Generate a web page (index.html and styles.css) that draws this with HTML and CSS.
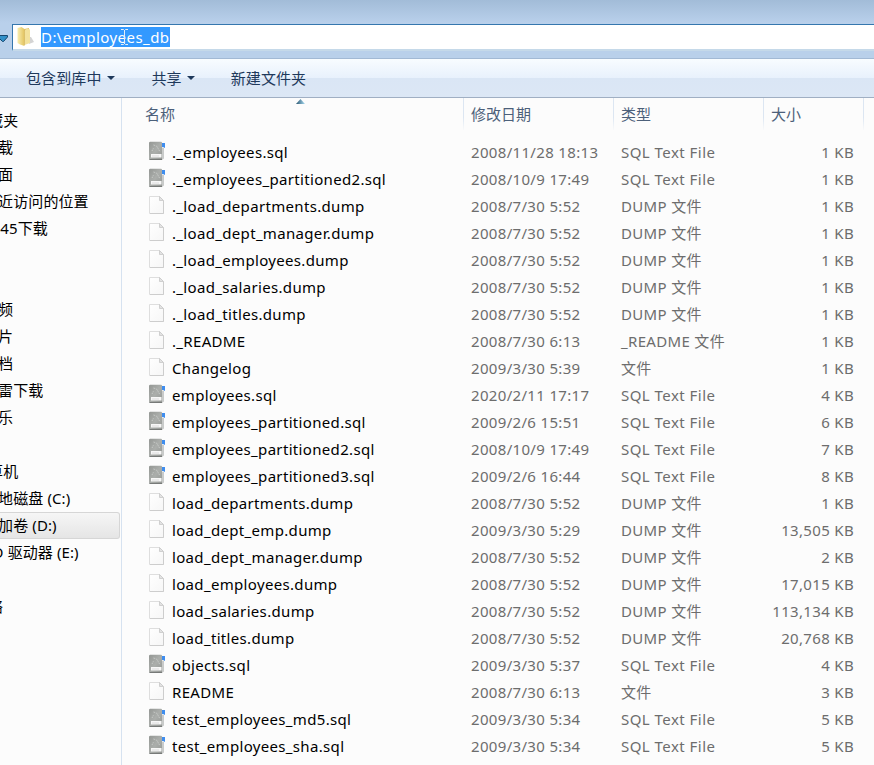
FILE: index.html
```
<!DOCTYPE html>
<html lang="zh-CN">
<head>
<meta charset="utf-8">
<title>employees_db</title>
<link rel="stylesheet" href="styles.css">
</head>
<body>
<svg class="defs" width="0" height="0">
  <defs>
    <linearGradient id="gray" x1="0" y1="0" x2="1" y2="1"><stop offset="0" stop-color="#949794"/><stop offset=".5" stop-color="#abaeab"/><stop offset="1" stop-color="#949794"/></linearGradient>
    <linearGradient id="page" x1="0" y1="0" x2="1" y2="1"><stop offset="0" stop-color="#fff"/><stop offset="1" stop-color="#f6f6f6"/></linearGradient>
    <linearGradient id="fold" x1="0" y1="0" x2="1" y2="0"><stop offset="0" stop-color="#f9edb0"/><stop offset="1" stop-color="#e2c35e"/></linearGradient>
    <linearGradient id="arrow" x1="0" y1="0" x2="1" y2="0"><stop offset="0" stop-color="#27536d"/><stop offset="1" stop-color="#a9dcf3"/></linearGradient>
    <symbol id="sql" viewBox="0 0 18 20">
      <path d="M12.500 2h4.500v5l-2-1h-2.500z" fill="#3f8dee"/>
      <path d="M2 .7h11q1 0 1 1v17.300H2.500q-1.500 0-1.500-1.500V1.500z" fill="url(#gray)"/>
      <path d="M14 6.500l2 .5v10.500l-2 1.500z" fill="#c9cbca"/>
      <path d="M4 10l1.500-3M5.500 4l3 1 2 3 1.500 3" stroke="#d0d3d0" stroke-width=".8" stroke-dasharray="1.500 1" fill="none"/>
      <path d="M3 13h10.500v3.500H3z" fill="#f7f7f7"/>
      <path d="M4 15h7" stroke="#ccc" stroke-width=".6"/>
      <path d="M1.500 18.500h12.500" stroke="#777a78"/>
    </symbol>
    <symbol id="doc" viewBox="0 0 18 20">
      <path d="M1.500 1.500h10l4 4v13h-14z" fill="url(#page)" stroke="#dedede"/>
      <path d="M2 18.500h13.500V6" fill="none" stroke="#cdcdcd"/>
      <path d="M11.500 1.500v4h4z" fill="#e3e3e3" stroke="#c8c8c8" stroke-width=".8"/>
    </symbol>
  </defs>
</svg>
<div class="window">
  <header class="top">
    <svg class="history" width="9" height="8" viewBox="0 0 9 8"><path d="M-4 .5H7.500v1.500L3.500 6.500H2.500L-4 1z" fill="#3290c8"/><path d="M-1 .5H7.500v1.500L3.500 6.500H2.500L-1 3" fill="none" stroke="#16466e"/></svg>
    <div class="address">
      <svg width="20" height="22" viewBox="0 0 20 22">
        <path d="M13 18l5-2-3-5h-3z" fill="#aaa" opacity=".5"/>
        <path d="M6 3.500l7-1.500v14l-4 2z" fill="#dfc36a"/>
        <path d="M1.500 2l4-1 3 2v17L4 18.500 1.500 17z" fill="url(#fold)"/>
        <path d="M8 5l3-2.500 3 1V17l-5.500 2z" fill="#f3e29c"/>
        <path d="M8.500 4v15" stroke="#d3b55c" stroke-width=".7"/>
      </svg>
      <span class="path">D:\employees_db</span>
      <svg class="caret" width="9" height="16" viewBox="0 0 9 16"><path d="M1 .5h2.500l1 1 1-1H8M4.500 1v14M1 15.500h2.500l1-1 1 1H8" fill="none" stroke="#e6eef5"/></svg>
    </div>
  </header>
  <nav class="toolbar">
    <span class="tool">包含到库中<i class="down"></i></span>
    <span class="tool share">共享<i class="down"></i></span>
    <span class="tool create">新建文件夹</span>
  </nav>
  <main class="body">
    <aside class="tree">
      <div class="node group">收藏夹</div>
      <div class="node">下载</div>
      <div class="node">桌面</div>
      <div class="node">最近访问的位置</div>
      <div class="node">2345下载</div>
      <div class="node"></div>
      <div class="node"></div>
      <div class="node">视频</div>
      <div class="node">图片</div>
      <div class="node">文档</div>
      <div class="node">迅雷下载</div>
      <div class="node">音乐</div>
      <div class="node"></div>
      <div class="node group">计算机</div>
      <div class="node">本地磁盘 (C:)</div>
      <div class="node selected">附加卷 (D:)</div>
      <div class="node">CD 驱动器 (E:)</div>
      <div class="node"></div>
      <div class="node group">网络</div>
    </aside>
    <section class="files">
      <div class="heads"><span class="sorted">名称<svg width="9" height="5" viewBox="0 0 9 5"><path d="M0 5L4.500 0 9 5z" fill="url(#arrow)"/></svg></span><span>修改日期</span><span>类型</span><span>大小</span></div>
      <div class="row"><svg><use href="#sql"/></svg><b>._employees.sql</b><span>2008/11/28 18:13</span><span class="type">SQL Text File</span><em>1 KB</em></div>
      <div class="row"><svg><use href="#sql"/></svg><b>._employees_partitioned2.sql</b><span>2008/10/9 17:49</span><span class="type">SQL Text File</span><em>1 KB</em></div>
      <div class="row"><svg><use href="#doc"/></svg><b>._load_departments.dump</b><span>2008/7/30 5:52</span><span>DUMP 文件</span><em>1 KB</em></div>
      <div class="row"><svg><use href="#doc"/></svg><b>._load_dept_manager.dump</b><span>2008/7/30 5:52</span><span>DUMP 文件</span><em>1 KB</em></div>
      <div class="row"><svg><use href="#doc"/></svg><b>._load_employees.dump</b><span>2008/7/30 5:52</span><span>DUMP 文件</span><em>1 KB</em></div>
      <div class="row"><svg><use href="#doc"/></svg><b>._load_salaries.dump</b><span>2008/7/30 5:52</span><span>DUMP 文件</span><em>1 KB</em></div>
      <div class="row"><svg><use href="#doc"/></svg><b>._load_titles.dump</b><span>2008/7/30 5:52</span><span>DUMP 文件</span><em>1 KB</em></div>
      <div class="row"><svg><use href="#doc"/></svg><b>._README</b><span>2008/7/30 6:13</span><span>_README 文件</span><em>1 KB</em></div>
      <div class="row"><svg><use href="#doc"/></svg><b>Changelog</b><span>2009/3/30 5:39</span><span>文件</span><em>1 KB</em></div>
      <div class="row"><svg><use href="#sql"/></svg><b>employees.sql</b><span>2020/2/11 17:17</span><span class="type">SQL Text File</span><em>4 KB</em></div>
      <div class="row"><svg><use href="#sql"/></svg><b>employees_partitioned.sql</b><span>2009/2/6 15:51</span><span class="type">SQL Text File</span><em>6 KB</em></div>
      <div class="row"><svg><use href="#sql"/></svg><b>employees_partitioned2.sql</b><span>2008/10/9 17:49</span><span class="type">SQL Text File</span><em>7 KB</em></div>
      <div class="row"><svg><use href="#sql"/></svg><b>employees_partitioned3.sql</b><span>2009/2/6 16:44</span><span class="type">SQL Text File</span><em>8 KB</em></div>
      <div class="row"><svg><use href="#doc"/></svg><b>load_departments.dump</b><span>2008/7/30 5:52</span><span>DUMP 文件</span><em>1 KB</em></div>
      <div class="row"><svg><use href="#doc"/></svg><b>load_dept_emp.dump</b><span>2009/3/30 5:29</span><span>DUMP 文件</span><em>13,505 KB</em></div>
      <div class="row"><svg><use href="#doc"/></svg><b>load_dept_manager.dump</b><span>2008/7/30 5:52</span><span>DUMP 文件</span><em>2 KB</em></div>
      <div class="row"><svg><use href="#doc"/></svg><b>load_employees.dump</b><span>2008/7/30 5:52</span><span>DUMP 文件</span><em>17,015 KB</em></div>
      <div class="row"><svg><use href="#doc"/></svg><b>load_salaries.dump</b><span>2008/7/30 5:52</span><span>DUMP 文件</span><em>113,134 KB</em></div>
      <div class="row"><svg><use href="#doc"/></svg><b>load_titles.dump</b><span>2008/7/30 5:52</span><span>DUMP 文件</span><em>20,768 KB</em></div>
      <div class="row"><svg><use href="#sql"/></svg><b>objects.sql</b><span>2009/3/30 5:37</span><span class="type">SQL Text File</span><em>4 KB</em></div>
      <div class="row"><svg><use href="#doc"/></svg><b>README</b><span>2008/7/30 6:13</span><span>文件</span><em>3 KB</em></div>
      <div class="row"><svg><use href="#sql"/></svg><b>test_employees_md5.sql</b><span>2009/3/30 5:34</span><span class="type">SQL Text File</span><em>5 KB</em></div>
      <div class="row"><svg><use href="#sql"/></svg><b>test_employees_sha.sql</b><span>2009/3/30 5:34</span><span class="type">SQL Text File</span><em>5 KB</em></div>
    </section>
  </main>
</div>
</body>
</html>
```
FILE: styles.css
```
* { box-sizing: border-box; }
body { margin: 0; overflow: hidden; font: 15px/27px "Noto Sans", "Noto Sans CJK SC", sans-serif; color: #000; }
.defs { position: absolute; }
.window { width: 874px; height: 765px; overflow: hidden; display: flex; flex-direction: column; background: #fcfcfc; }
.top { flex: none; height: 59px; display: flex; padding-top: 24px; background: linear-gradient(#a2bcd8, #b9d0eb 23px, #b9d0ea); border-bottom: 1px solid #a2b9d4; }
.history { margin-top: 11px; }
.address { position: relative; flex: 1; height: 27px; margin-left: 3px; display: flex; align-items: center; padding-left: 3px; background: #fff; border: solid #3577ae; border-width: 1px 0 2px 1px; border-bottom-color: #c5d9e9; }
.path { margin-left: 5px; width: 129px; height: 20px; line-height: 20px; background: #3399ff; color: #fff; white-space: nowrap; letter-spacing: .45px; }
.caret { position: absolute; left: 107px; top: 4px; }
.toolbar { flex: none; height: 39px; display: flex; align-items: center; padding-left: 26px; color: #1e395b; letter-spacing: .1px; background: linear-gradient(#f8fcff, #e8f1fc 19px, #dae6f5 19px, #dce7f5 37px); border-bottom: 1px solid #a0afc3; }
.tool { display: flex; align-items: center; }
.share { margin-left: 37px; }
.create { margin-left: 36px; }
.down { margin-left: 5px; border: solid transparent; border-width: 4px 4px 0; border-top-color: #1e395b; }
.body { flex: 1; display: flex; min-height: 0; }
.tree { width: 122px; flex: none; padding-top: 9px; overflow: hidden; border-right: 1px solid #d6e2f0; letter-spacing: .1px; }
.node { height: 27px; white-space: pre; text-indent: -17px; }
.group { text-indent: -27px; }
.selected { width: 120px; line-height: 25px; background: linear-gradient(#f6f6f6, #e5e5e5); border: 1px solid #d6d6d6; border-left: 0; border-radius: 0 3px 3px 0; }
.files { flex: 1; }
.heads { height: 41px; display: grid; grid-template-columns: 342px 150px 150px 100px; color: #4c607a; }
.heads span { height: 32px; line-height: 33px; padding-left: 7px; border-right: 1px solid; border-image: linear-gradient(#dce6f2 60%, #fcfcfc) 1; }
.heads .sorted { position: relative; padding-left: 23px; }
.sorted svg { position: absolute; left: 174px; top: 1px; }
.row { height: 27px; display: grid; grid-template-columns: 24px 299px 150px 130px 103px; padding-left: 26px; white-space: nowrap; color: #6d6d6d; letter-spacing: .33px; }
.row svg { width: 18px; height: 20px; margin-top: 2px; }
.row b { font-weight: 400; color: #000; }
.row .type { letter-spacing: .46px; }
.row em { font-style: normal; text-align: right; }
```
